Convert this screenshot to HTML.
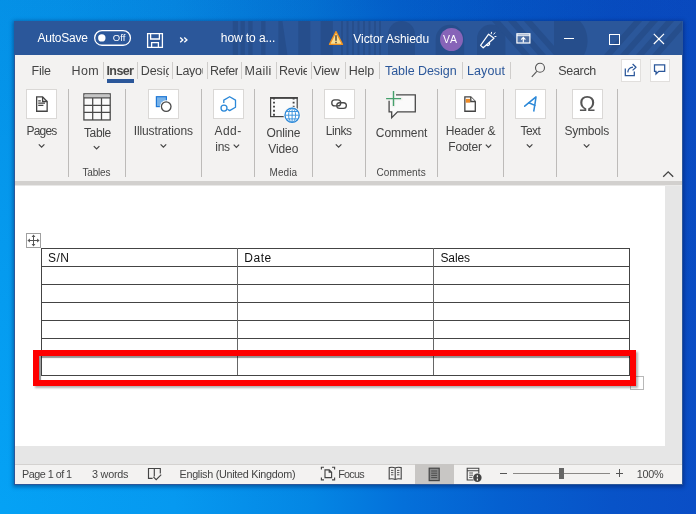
<!DOCTYPE html>
<html><head><meta charset="utf-8"><title>Word</title>
<style>
html,body{margin:0;padding:0}
body{width:696px;height:514px;overflow:hidden;position:relative;font-family:"Liberation Sans",sans-serif;
 background:radial-gradient(ellipse 320px 140px at 380px 0,rgba(0,30,150,.13),rgba(0,30,150,0)),linear-gradient(180deg,rgba(0,40,140,.14) 0%,rgba(0,40,140,.03) 70%,rgba(0,40,140,0) 100%),linear-gradient(90deg,#05a2f5 0%,#0699f0 25%,#0486e4 45%,#0470da 58%,#0560d0 72%,#0853c8 88%,#0a4ec6 100%);}
.abs,.t,svg{position:absolute}
.t{white-space:pre;line-height:1}
.tab{overflow:hidden}
#shadow{left:14px;top:21px;width:669px;height:464px;box-shadow:0 1px 4px 1px rgba(0,10,60,.4);}
#title{left:14px;top:21px;width:669px;height:34px;background:#2b579a}
#frame{left:14px;top:55px;width:669px;height:430px;background:#2b579a}
#ribbon{left:15px;top:55px;width:667px;height:126px;background:#f3f2f1}
#docbg{left:15px;top:181px;width:667px;height:283px;background:#e6e6e6}
#band{left:15px;top:181px;width:667px;height:4px;background:#d2d0ce}
#paper{left:15px;top:185px;width:650px;height:261px;background:#fff}
#status{left:15px;top:464px;width:667px;height:20px;background:#f3f2f1;border-top:1px solid #d4d2d0;box-sizing:border-box}
.sep{width:1.2px;background:#bdbbb9;top:89px;height:88px}
.tsep{width:1.4px;background:#cfcdcb;top:61.5px;height:17.2px}
.box{top:89px;width:29px;height:28px;background:#fff;border:1px solid #dad8d6;box-sizing:content-box}
.hl{background:#444;height:1px;left:41px;width:589px}
.vl{background:#444;width:1px;top:248px;height:127px}
</style></head><body>
<div class="abs" id="shadow"></div>
<div class="abs" id="title"></div>
<div class="abs" id="frame"></div>
<div class="abs" id="ribbon"></div>
<div class="abs" id="docbg"></div>
<div class="abs" id="band"></div>
<div class="abs" style="left:15px;top:185px;width:667px;height:1px;background:#ebeae9"></div>
<div class="abs" id="paper" style="top:186px;height:260px"></div>
<div class="abs" style="left:15px;top:185px;width:650px;height:1px;background:#e9e8e7"></div>
<div class="abs" id="status"></div>

<!-- title bar decorative pattern -->
<svg id="pattern" style="left:14px;top:21px" width="668" height="34" viewBox="0 0 668 34">
 <g fill="#264e8c">
  <rect x="218.8" y="0" width="5.2" height="34"/><rect x="226.5" y="0" width="4.3" height="34"/><rect x="234.3" y="0" width="4.3" height="34"/><rect x="247.2" y="0" width="4.3" height="34"/>
  <path d="M264.4 0 h4 l5 34 h-9z"/>
  <rect x="284.3" y="0" width="12" height="34"/><rect x="306.7" y="0" width="12.1" height="34"/>
  <rect x="327" y="0" width="2" height="34"/><rect x="332.5" y="0" width="2" height="34"/><rect x="338" y="0" width="2" height="34"/><rect x="343.5" y="0" width="2" height="34"/><rect x="349" y="0" width="2" height="34"/><rect x="354.5" y="0" width="2" height="34"/><rect x="360" y="0" width="2" height="34"/><rect x="365" y="0" width="2" height="34"/>
  <path d="M374 34 V13.5 a13.5 13.5 0 0 1 27 0 V34z"/>
  <path d="M421.7 34 V18 a14.2 14.2 0 0 1 28.4 0 V34z"/>
  <path d="M463 34 V17.7 a14.2 14.2 0 0 1 28.4 0 V34z"/>
  <path d="M478 0 h8 l30 34 h-8z M494 0 h8 l30 34 h-8z M510 0 h8 l30 34 h-8z"/>
  <path d="M540 0 h26 a30 30 0 0 1 4 34 h-30z"/>
  <path d="M590 34 l30 -34 h8 l-30 34z M606 34 l30 -34 h8 l-30 34z M622 34 l30 -34 h8 l-30 34z M638 34 l30 -34 v9 l-22 25z"/>
 </g>
</svg>

<!-- AutoSave toggle -->
<svg style="left:93px;top:29px" width="40" height="18" viewBox="93 29 40 18"><rect x="94.65" y="30.65" width="35.8" height="14.6" rx="7.3" fill="none" stroke="#fff" stroke-width="1.3"/><circle cx="101.8" cy="37.9" r="3.7" fill="#fff"/></svg>
<!-- save icon -->
<svg style="left:146px;top:32px" width="18" height="17" viewBox="0 0 18 17" fill="none" stroke="#fff" stroke-width="1.3">
 <path d="M1.6 1.6 H16.4 V15.4 H1.6 Z"/><path d="M4.6 1.6 V7 H13.4 V1.6"/><path d="M5.6 15.4 V10.6 H12.4 V15.4"/>
</svg>
<!-- more commands chevrons -->
<svg style="left:178px;top:35px" width="12" height="10" viewBox="178 35 12 10" fill="none" stroke="#fff" stroke-width="1.35"><path d="M180.2 37.6 L182.8 39.9 L180.2 42.2 M184.3 37.6 L186.9 39.9 L184.3 42.2"/></svg>
<!-- warning icon -->
<svg style="left:327px;top:29px" width="18" height="18" viewBox="327 29 18 18">
 <path d="M336 31.6 L342.5 44.4 H329.5 Z" fill="#f9de92" stroke="#f0921e" stroke-width="1.3" stroke-linejoin="round"/>
 <rect x="335.3" y="35.2" width="1.4" height="5.6" fill="#4a4036"/><rect x="335.3" y="41.8" width="1.4" height="1.5" fill="#4a4036"/>
</svg>
<!-- avatar -->
<div class="abs" style="left:439.5px;top:27.5px;width:23px;height:23px;border-radius:50%;background:#8764b8"></div>
<!-- coming soon / pen icon -->
<svg style="left:478px;top:30px" width="20" height="20" viewBox="478 30 20 20" fill="none" stroke="#fff" stroke-width="1.2" stroke-linejoin="round" stroke-linecap="round">
 <path d="M480.6 45.4 L488.6 34.2 L494 38.2 L483.2 47.8 Z"/><path d="M486.6 44.8 a1.6 1.6 0 0 0 2.6 -2.2"/><path d="M491.6 32.3 L491.2 33.8 M493.8 34 L495.1 32.8 M494.8 36.6 L496 36.5" stroke-width="1"/>
</svg>
<!-- ribbon display options -->
<svg style="left:516px;top:33px" width="15" height="11" viewBox="0 0 15 11" fill="none" stroke="#fff" stroke-width="1.2">
 <rect x="0.9" y="0.8" width="13" height="9.2" fill="rgba(255,255,255,.18)"/><path d="M0.9 2.4 H13.9" stroke-width="1.6" stroke="rgba(255,255,255,.75)"/><path d="M7.3 9.6 V4.6 M5.2 6.6 L7.3 4.4 L9.4 6.6"/>
</svg>
<!-- min / max / close -->
<div class="abs" style="left:563.5px;top:38.3px;width:10.5px;height:1.2px;background:#fff"></div>
<div class="abs" style="left:608.5px;top:33.5px;width:9px;height:9px;border:1.2px solid #fff"></div>
<svg style="left:653px;top:33px" width="12" height="12" viewBox="0 0 12 12" stroke="#fff" stroke-width="1.2"><path d="M0.8 0.8 L11 11 M11 0.8 L0.8 11"/></svg>

<!-- tabs -->
<div class="abs tsep" style="left:103px"></div><div class="abs tsep" style="left:137px"></div><div class="abs tsep" style="left:172px"></div>
<div class="abs tsep" style="left:206.5px"></div><div class="abs tsep" style="left:241px"></div><div class="abs tsep" style="left:276px"></div>
<div class="abs tsep" style="left:310.5px"></div><div class="abs tsep" style="left:345px"></div><div class="abs tsep" style="left:378.5px"></div>
<div class="abs tsep" style="left:462px"></div><div class="abs tsep" style="left:510px"></div>
<div class="abs" style="left:107px;top:79.4px;width:27px;height:3.2px;background:#2b579a"></div>
<!-- search icon -->
<svg style="left:531px;top:62px" width="15" height="16" viewBox="0 0 15 16" fill="none" stroke="#555" stroke-width="1.1"><circle cx="9" cy="5.8" r="4.5"/><path d="M5.8 9.4 L0.8 14.8"/></svg>
<!-- share / comments buttons -->
<div class="abs" style="left:620.6px;top:58.5px;width:20px;height:23px;background:#fff;border:1px solid #e1dfdd;box-sizing:border-box"></div>
<div class="abs" style="left:649.5px;top:58.5px;width:20px;height:23px;background:#fff;border:1px solid #e1dfdd;box-sizing:border-box"></div>
<svg style="left:622px;top:61px" width="17" height="17" viewBox="622 61 17 17" fill="none" stroke="#2b579a" stroke-width="1.25"><path d="M625.3 68.4 V75.5 H634.3 V71.4"/><path d="M627.8 72.4 C628 69.2 630 67.4 633 67.2"/><path d="M632.6 64 L636 67.2 L632.6 70.4" stroke-linejoin="round"/></svg>
<svg style="left:652px;top:62px" width="16" height="15" viewBox="652 62 16 15" fill="none" stroke="#2b579a" stroke-width="1.25"><path d="M654.5 64.9 H664.7 V71.3 H658.8 L656 74 V71.3 H654.5 Z"/></svg>

<!-- ribbon separators -->
<div class="abs sep" style="left:67.5px"></div><div class="abs sep" style="left:125px"></div><div class="abs sep" style="left:200.5px"></div>
<div class="abs sep" style="left:254px"></div><div class="abs sep" style="left:311.5px"></div><div class="abs sep" style="left:365px"></div>
<div class="abs sep" style="left:436.8px"></div><div class="abs sep" style="left:502.5px"></div><div class="abs sep" style="left:556.3px"></div><div class="abs sep" style="left:616.5px"></div>
<!-- ribbon white boxes -->
<div class="abs box" style="left:26px"></div><div class="abs box" style="left:148px"></div><div class="abs box" style="left:213px"></div>
<div class="abs box" style="left:324px"></div><div class="abs box" style="left:455px"></div><div class="abs box" style="left:515px"></div><div class="abs box" style="left:571.5px"></div>

<!-- pages icon -->
<svg style="left:35px;top:95px" width="14" height="18" viewBox="35 95 14 18" fill="none" stroke="#444" stroke-width="1.3"><path d="M36.65 96.95 H42.6 L47.15 101.5 V111.25 H36.65 Z" fill="#fff"/><path d="M42.6 96.95 V101.5 H47.15"/><path d="M38.2 100.8 H40.8 M38.2 103.1 H45 M38.2 105.3 H43.4" stroke-width="1.2"/></svg>
<!-- table icon -->
<svg style="left:82px;top:92px" width="30" height="30" viewBox="82 92 30 30"><rect x="83.9" y="93.85" width="26.3" height="26.1" fill="#fbfbfb" stroke="#4a4a4a" stroke-width="1.3"/><rect x="84.5" y="94.5" width="25.1" height="3" fill="#c6c6c6"/><path d="M83.9 97.8 H110.2 M83.9 105.3 H110.2 M83.9 112.4 H110.2 M92.7 97.8 V120 M101.5 97.8 V120" stroke="#4a4a4a" stroke-width="1.25" fill="none"/></svg>
<!-- illustrations icon -->
<svg style="left:154px;top:94px" width="20" height="20" viewBox="154 94 20 20"><rect x="156.4" y="96.7" width="10" height="9.9" fill="#78b2e8" stroke="#1f78d6" stroke-width="1.2"/><circle cx="166.2" cy="106.6" r="6.3" fill="#fff"/><circle cx="166.2" cy="106.6" r="4.8" fill="#fff" stroke="#4a4a4a" stroke-width="1.3"/></svg>
<!-- add-ins icon -->
<svg style="left:218px;top:94px" width="20" height="20" viewBox="218 94 20 20" fill="none" stroke="#2b88d8" stroke-width="1.3" stroke-linejoin="round"><path d="M223.8 103 V100.1 L229.65 96.7 L235.5 100.1 V107.2 L229.65 110.6 L227.4 109.3"/><circle cx="224" cy="108.1" r="3"/></svg>
<!-- online video icon -->
<svg style="left:269px;top:96px" width="32" height="28" viewBox="269 96 32 28"><rect x="270.6" y="97.8" width="26.6" height="18.8" fill="#fbfbfb" stroke="#444" stroke-width="1.2"/><rect x="270" y="97" width="27.8" height="1.8" fill="#444"/><path d="M274 97.6 V117 M293.6 97.6 V112" stroke="#444" stroke-width="1.9" stroke-dasharray="1.9 2.15" fill="none"/><circle cx="292.1" cy="115.2" r="8.7" fill="#f6f5f4"/><circle cx="292.1" cy="115.2" r="7.1" fill="#fff" stroke="#2b88d8" stroke-width="1.3"/><ellipse cx="292.1" cy="115.2" rx="3.5" ry="7" fill="none" stroke="#3a92dc" stroke-width="0.95"/><path d="M292.1 108.2 V122.2 M285.2 115.2 H299 M286.4 111.5 H297.8 M286.4 118.9 H297.8" stroke="#3a92dc" stroke-width="0.95" fill="none"/></svg>
<!-- links icon -->
<svg style="left:330px;top:98px" width="18" height="12" viewBox="330 98 18 12" fill="none" stroke="#484848" stroke-width="1.3"><rect x="331.75" y="99.85" width="9" height="6.1" rx="3.05"/><rect x="336.75" y="102.75" width="9.6" height="5.7" rx="2.85"/></svg>
<!-- comment icon -->
<svg style="left:385px;top:90px" width="33" height="30" viewBox="385 90 33 30" fill="none"><path d="M389.1 94.9 H415.3 V111.9 H397.5 L391.7 117.7 V111.9 H389.1 Z" fill="#fafafa"/><path d="M385 98.6 H402.6 M393.5 90 V107.6" stroke="#f3f2f1" stroke-width="3.6"/><path d="M396 94.9 H415.3 V111.9 H397.5 L391.7 117.7 V111.9 H389.1 V100.8" stroke="#484848" stroke-width="1.3"/><path d="M386.1 98.6 H401.1 M393.5 91 V106" stroke="#45a06c" stroke-width="1.4"/></svg>
<!-- header & footer icon -->
<svg style="left:463px;top:95px" width="14" height="18" viewBox="463 95 14 18" fill="none" stroke="#444" stroke-width="1.3"><path d="M464.85 96.95 H470.8 L475.3 101.5 V111.25 H464.85 Z" fill="#fff"/><rect x="465.8" y="98.9" width="4.4" height="3.8" fill="#ee8a24" stroke="none"/><path d="M470.8 96.95 V101.5 H475.3" fill="#fff"/></svg>
<!-- text icon -->
<svg style="left:522px;top:94px" width="17" height="19" viewBox="522 94 17 19" fill="none" stroke="#2b88d8" stroke-width="1.5" stroke-linecap="round" stroke-linejoin="round"><path d="M524.7 106.2 L536 96.9 C535.4 101.6 534.6 106.4 533.8 111"/><path d="M528.8 102.7 L534.9 105.4"/></svg>
<!-- chevrons -->
<svg style="left:0;top:0;pointer-events:none" width="696" height="514" viewBox="0 0 696 514" fill="none" stroke="#444" stroke-width="1.2">
 <path d="M38.8 144.4 l2.8 2.8 l2.8 -2.8"/><path d="M93.8 146.2 l2.8 2.8 l2.8 -2.8"/><path d="M160.6 144.4 l2.8 2.8 l2.8 -2.8"/>
 <path d="M233.7 144.7 l2.7 2.7 l2.7 -2.7"/><path d="M335.8 144.4 l2.8 2.8 l2.8 -2.8"/><path d="M485.8 144.7 l2.7 2.7 l2.7 -2.7"/>
 <path d="M526.8 144.4 l2.8 2.8 l2.8 -2.8"/><path d="M583.8 144.4 l2.8 2.8 l2.8 -2.8"/>
 <path d="M663.2 176.8 l5 -5 l5 5" stroke-width="1.3"/>
</svg>

<!-- table -->
<div class="abs hl" style="top:248px"></div><div class="abs hl" style="top:266px"></div><div class="abs hl" style="top:284px"></div><div class="abs hl" style="top:302px"></div>
<div class="abs hl" style="top:320px"></div><div class="abs hl" style="top:338px"></div><div class="abs hl" style="top:374.5px"></div>
<div class="abs vl" style="left:41px"></div><div class="abs vl" style="left:237px;background:#666"></div><div class="abs vl" style="left:433px;background:#666"></div><div class="abs vl" style="left:629px"></div>
<!-- move handle -->
<div class="abs" style="left:26px;top:233px;width:13px;height:13px;border:1px solid #a0a0a0;background:#fff"></div>
<svg style="left:27px;top:234px" width="13" height="13" viewBox="0 0 13 13" fill="#555" stroke="#555" stroke-width="1"><path d="M1.6 6.5 H11.4 M6.5 1.6 V11.4" fill="none"/><path d="M6.5 0.4 L8.4 2.9 H4.6 Z M6.5 12.6 L8.4 10.1 H4.6 Z M0.4 6.5 L2.9 4.6 V8.4 Z M12.6 6.5 L10.1 4.6 V8.4 Z" stroke="none"/></svg>
<!-- resize handle -->
<div class="abs" style="left:630px;top:376px;width:12px;height:12px;border:1px solid #b8b8b8;background:#fff"></div>
<!-- red highlight rectangle -->
<div class="abs" style="left:33px;top:350px;width:591px;height:24px;border:6px solid #fe0000;box-shadow:2px 2px 2px rgba(0,0,0,.3), inset 2px 2px 1px rgba(0,0,0,.42)"></div>

<!-- status bar icons -->
<div class="abs" style="left:415px;top:464px;width:39px;height:20px;background:#c8c6c4"></div>
<svg style="left:146px;top:466px" width="17" height="16" viewBox="146 466 17 16" fill="none" stroke="#444" stroke-width="1.15"><path d="M154.3 468.5 V476.6 M154.3 468.5 H148.5 V478.3 H152.6 M154.3 468.5 H160.3 V473.6"/><path d="M153.4 476.8 L156.2 479.6 L161.2 474.6"/></svg>
<svg style="left:319px;top:465px" width="18" height="17" viewBox="319 465 18 17" fill="none" stroke="#444" stroke-width="1.15"><path d="M321.4 469.6 V467.2 H324 M332 467.2 H334.6 V469.6 M334.6 477.4 V479.8 H332 M324 479.8 H321.4 V477.4"/><path d="M325 469.8 H329.2 L331.6 472.2 V477.6 H325 Z M329.2 469.8 V472.2 H331.6"/></svg>
<svg style="left:388px;top:466px" width="15" height="15" viewBox="0 0 15 15" fill="none" stroke="#444" stroke-width="1.1"><path d="M7.2 2 V13.6 M7.2 2 C5.6 1.2 3.2 1.2 1.2 1.6 V13 C3.2 12.6 5.6 12.6 7.2 13.6 M7.2 2 C8.8 1.2 11.2 1.2 13.2 1.6 V13 C11.2 12.6 8.8 12.6 7.2 13.6"/><path d="M3 4.4 H5.4 M3 6.6 H5.4 M3 8.8 H5.4 M9 4.4 H11.4 M9 6.6 H11.4 M9 8.8 H11.4" stroke-width=".9"/></svg>
<svg style="left:428px;top:466.5px" width="13" height="15" viewBox="0 0 13 15" fill="none" stroke="#444" stroke-width="1.2"><rect x="1.2" y="1.2" width="10" height="12.4" fill="#8a8a8a"/><path d="M3.2 4 H9.2 M3.2 6.2 H9.2 M3.2 8.4 H9.2 M3.2 10.6 H9.2" stroke="#444" stroke-width=".9"/></svg>
<svg style="left:466px;top:466.5px" width="17" height="16" viewBox="0 0 17 16" fill="none" stroke="#444" stroke-width="1.1"><path d="M7.6 13 H1.2 V1.2 H12.8 V6.4 M1.2 3.8 H12.8"/><path d="M3.2 6 H7 M3.2 8.2 H7 M3.2 10.4 H6.4" stroke-width=".9"/><circle cx="11.4" cy="10.8" r="4.2" fill="#444" stroke="none"/><path d="M11.4 8.2 V10.2 M11.4 11.4 V13.4" stroke="#f3f2f1" stroke-width="1.2"/></svg>
<!-- zoom slider -->
<div class="abs" style="left:500px;top:472.5px;width:7px;height:1px;background:#555"></div>
<div class="abs" style="left:513px;top:472.5px;width:97px;height:1px;background:#8a8886"></div>
<div class="abs" style="left:559px;top:468px;width:5px;height:11px;background:#666"></div>
<div class="abs" style="left:615.5px;top:472.5px;width:7.5px;height:1px;background:#555"></div>
<div class="abs" style="left:618.8px;top:469px;width:1px;height:8px;background:#555"></div>

<div class="abs" id="txt" style="left:0;top:0;width:696px;height:514px;will-change:transform">
<span class="t tab" style="left:71.5px;top:64.6px;width:27.9px;font-size:12.5px;color:#444;letter-spacing:0.4px">Home</span>
<span class="t tab" style="left:106.5px;top:64.6px;width:27.5px;font-size:12.5px;color:#484848;font-weight:700;letter-spacing:-0.6px">Insert</span>
<span class="t tab" style="left:140.8px;top:64.6px;width:28.2px;font-size:12.5px;color:#444;letter-spacing:-0.1px">Design</span>
<span class="t tab" style="left:175.8px;top:64.6px;width:27.2px;font-size:12.5px;color:#444;letter-spacing:-0.3px">Layout</span>
<span class="t tab" style="left:210.0px;top:64.6px;width:28.0px;font-size:12.5px;color:#444;letter-spacing:-0.4px">References</span>
<span class="t tab" style="left:244.5px;top:64.6px;width:27.8px;font-size:12.5px;color:#444;letter-spacing:0.3px">Mailings</span>
<span class="t tab" style="left:279.0px;top:64.6px;width:28.3px;font-size:12.5px;color:#444;letter-spacing:-0.3px">Review</span>
<span class="t tab" style="left:313.3px;top:64.6px;width:27.7px;font-size:12.5px;color:#444;letter-spacing:-0.2px">View</span>
<span class="t tab" style="left:348.8px;top:64.6px;width:26.7px;font-size:12.5px;color:#444;letter-spacing:-0.1px">Help</span>
<!-- omega symbol -->
<span class="t" style="left:578.9px;top:93.4px;font-size:22px;color:#555;font-family:'Liberation Sans',sans-serif">Ω</span>
<span class="t" style="left:37.5px;top:32.3px;font-size:12px;letter-spacing:-0.22px;color:#fff;">AutoSave</span>
<span class="t" style="left:112.7px;top:33.0px;font-size:9.5px;letter-spacing:0.10px;color:#fff;">Off</span>
<span class="t" style="left:220.8px;top:32.3px;font-size:12px;letter-spacing:-0.08px;color:#fff;">how to a...</span>
<span class="t" style="left:353.3px;top:32.8px;font-size:12px;letter-spacing:-0.05px;color:#fff;">Victor Ashiedu</span>
<span class="t" style="left:443.1px;top:33.7px;font-size:10.5px;letter-spacing:0.78px;color:#fff;">VA</span>
<span class="t" style="left:31.5px;top:64.6px;font-size:12.5px;letter-spacing:-0.21px;color:#444;">File</span>
<span class="t" style="left:385.0px;top:64.6px;font-size:12.5px;letter-spacing:-0.06px;color:#2b579a;">Table Design</span>
<span class="t" style="left:467.0px;top:64.6px;font-size:12.5px;letter-spacing:0.09px;color:#2b579a;">Layout</span>
<span class="t" style="left:558.2px;top:64.6px;font-size:12.5px;letter-spacing:-0.30px;color:#444;">Search</span>
<span class="t" style="left:26.5px;top:125.1px;font-size:12px;letter-spacing:-0.79px;color:#444;">Pages</span>
<span class="t" style="left:84.0px;top:126.8px;font-size:12px;letter-spacing:-0.38px;color:#444;">Table</span>
<span class="t" style="left:82.5px;top:167.5px;font-size:10px;letter-spacing:-0.18px;color:#484848;">Tables</span>
<span class="t" style="left:133.8px;top:125.1px;font-size:12px;letter-spacing:-0.13px;color:#444;">Illustrations</span>
<span class="t" style="left:214.5px;top:125.1px;font-size:12px;letter-spacing:0.44px;color:#444;">Add-</span>
<span class="t" style="left:215.3px;top:140.8px;font-size:12px;letter-spacing:-0.28px;color:#444;">ins</span>
<span class="t" style="left:266.5px;top:126.8px;font-size:12px;letter-spacing:-0.15px;color:#444;">Online</span>
<span class="t" style="left:268.3px;top:142.6px;font-size:12px;letter-spacing:-0.10px;color:#444;">Video</span>
<span class="t" style="left:269.5px;top:167.5px;font-size:10px;letter-spacing:0.11px;color:#484848;">Media</span>
<span class="t" style="left:325.8px;top:125.1px;font-size:12px;letter-spacing:-0.44px;color:#444;">Links</span>
<span class="t" style="left:375.8px;top:126.8px;font-size:12px;letter-spacing:-0.07px;color:#444;">Comment</span>
<span class="t" style="left:376.5px;top:167.5px;font-size:10px;letter-spacing:0.12px;color:#484848;">Comments</span>
<span class="t" style="left:445.8px;top:125.1px;font-size:12px;letter-spacing:-0.15px;color:#444;">Header &amp;</span>
<span class="t" style="left:448.3px;top:140.8px;font-size:12px;letter-spacing:-0.20px;color:#444;">Footer</span>
<span class="t" style="left:520.5px;top:125.0px;font-size:12px;letter-spacing:-0.55px;color:#444;">Text</span>
<span class="t" style="left:564.5px;top:125.0px;font-size:12px;letter-spacing:-0.23px;color:#444;">Symbols</span>
<span class="t" style="left:47.9px;top:251.6px;font-size:12px;letter-spacing:0.49px;color:#111;">S/N</span>
<span class="t" style="left:244.3px;top:251.6px;font-size:12px;letter-spacing:0.54px;color:#111;">Date</span>
<span class="t" style="left:440.5px;top:251.6px;font-size:12px;letter-spacing:-0.15px;color:#111;">Sales</span>
<span class="t" style="left:22.0px;top:469.1px;font-size:10.8px;letter-spacing:-0.51px;color:#444;">Page 1 of 1</span>
<span class="t" style="left:92.0px;top:469.1px;font-size:10.8px;letter-spacing:-0.22px;color:#444;">3 words</span>
<span class="t" style="left:179.5px;top:469.1px;font-size:10.8px;letter-spacing:-0.28px;color:#444;">English (United Kingdom)</span>
<span class="t" style="left:338.2px;top:469.1px;font-size:10.8px;letter-spacing:-0.72px;color:#444;">Focus</span>
<span class="t" style="left:636.8px;top:469.1px;font-size:10.8px;letter-spacing:-0.28px;color:#444;">100%</span>
</div>
</body></html>
